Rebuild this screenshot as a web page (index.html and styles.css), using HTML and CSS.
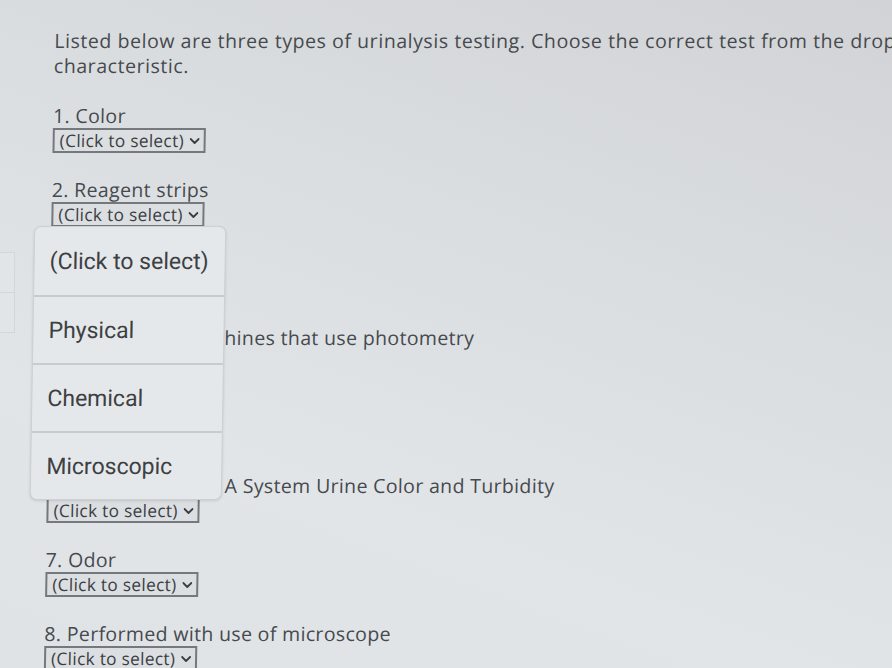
FILE: index.html
```html
<!DOCTYPE html>
<html lang="en">
<head>
<meta charset="utf-8">
<title>Urinalysis testing</title>
<link rel="stylesheet" href="styles.css">
</head>
<body>
<div class="ghost"><div class="ghost-row"></div><div class="ghost-row"></div></div>
<main class="sheet">
  <p class="title">Listed below are three types of urinalysis testing. Choose the correct test from the drop-down menu for each<br>characteristic.</p>

  <div class="q">
    <div class="label">1. Color</div>
    <div class="select"><span>(Click to select)</span><svg class="chev" width="10" height="6" viewBox="0 0 10 6"><polyline points="1,1 5,5 9,1"/></svg></div>
  </div>

  <div class="q">
    <div class="label">2. Reagent strips</div>
    <div class="select"><span>(Click to select)</span><svg class="chev" width="10" height="6" viewBox="0 0 10 6"><polyline points="1,1 5,5 9,1"/></svg>
      <div class="menu">
        <div class="opt">(Click to select)</div>
        <div class="opt">Physical</div>
        <div class="opt">Chemical</div>
        <div class="opt">Microscopic</div>
      </div>
    </div>
  </div>

  <div class="q">
    <div class="label">3. Glucose</div>
    <div class="select"><span>(Click to select)</span><svg class="chev" width="10" height="6" viewBox="0 0 10 6"><polyline points="1,1 5,5 9,1"/></svg></div>
  </div>

  <div class="q">
    <div class="label">4. Checked by machines that use photometry</div>
    <div class="select"><span>(Click to select)</span><svg class="chev" width="10" height="6" viewBox="0 0 10 6"><polyline points="1,1 5,5 9,1"/></svg></div>
  </div>

  <div class="q">
    <div class="label">5. Casts</div>
    <div class="select"><span>(Click to select)</span><svg class="chev" width="10" height="6" viewBox="0 0 10 6"><polyline points="1,1 5,5 9,1"/></svg></div>
  </div>

  <div class="q">
    <div class="label">6. Clinitek ATLAS&reg; A System Urine Color and Turbidity</div>
    <div class="select"><span>(Click to select)</span><svg class="chev" width="10" height="6" viewBox="0 0 10 6"><polyline points="1,1 5,5 9,1"/></svg></div>
  </div>

  <div class="q">
    <div class="label">7. Odor</div>
    <div class="select"><span>(Click to select)</span><svg class="chev" width="10" height="6" viewBox="0 0 10 6"><polyline points="1,1 5,5 9,1"/></svg></div>
  </div>

  <div class="q">
    <div class="label">8. Performed with use of microscope</div>
    <div class="select"><span>(Click to select)</span><svg class="chev" width="10" height="6" viewBox="0 0 10 6"><polyline points="1,1 5,5 9,1"/></svg></div>
  </div>
</main>
</body>
</html>
```
FILE: styles.css
```css
html, body {
  margin: 0;
  padding: 0;
}

body {
  width: 892px;
  height: 668px;
  overflow: hidden;
  position: relative;
  background: linear-gradient(200deg, #d1d3d6 0%, #dadde0 35%, #e1e5e8 70%, #dfe3e6 100%);
  font-family: "Open Sans", Lato, sans-serif;
  color: #46494d;
}

.ghost {
  position: absolute;
  left: -4px;
  top: 252px;
  width: 17px;
  border: 1px solid #d3d7da;
  background: #e1e5e8;
}

.ghost-row {
  height: 39px;
}

.ghost-row + .ghost-row {
  border-top: 1px solid #d3d7da;
}

.sheet {
  padding: 28px 0 0 55px;
  transform: skewX(-0.95deg);
  transform-origin: 0 0;
}

.title {
  margin: 0 0 26px;
  font-size: 19.5px;
  line-height: 25px;
  letter-spacing: 0.56px;
  white-space: nowrap;
}

.q {
  margin-bottom: 25px;
}

.label {
  font-size: 19.5px;
  line-height: 24px;
  letter-spacing: 0.35px;
  white-space: nowrap;
}

.select {
  position: relative;
  display: inline-flex;
  align-items: center;
  gap: 6px;
  height: 25px;
  box-sizing: border-box;
  padding: 0 4px 0 5px;
  border: 2px solid #75797d;
  background: #dcdfe2;
  font-size: 17.3px;
  letter-spacing: 0.3px;
  color: #3b3e42;
}

.chev polyline {
  fill: none;
  stroke: #3b3e42;
  stroke-width: 1.8;
  stroke-linecap: round;
  stroke-linejoin: round;
}

.menu {
  position: absolute;
  left: -19px;
  top: calc(100% + 1px);
  z-index: 2;
  width: 190px;
  background: #e5e8ea;
  border: 1px solid #cdd0d3;
  border-radius: 7px;
  box-shadow: 0 1px 3px rgba(0, 0, 0, 0.12);
  font-family: Roboto, "Noto Sans", sans-serif;
  font-size: 23px;
  letter-spacing: 0;
  color: #3d4043;
}

.opt {
  display: flex;
  align-items: center;
  height: 68px;
  box-sizing: border-box;
  padding-left: 15px;
  border-top: 2px solid #c8cbce;
}

.opt:first-child {
  border-top: 0;
}
```
